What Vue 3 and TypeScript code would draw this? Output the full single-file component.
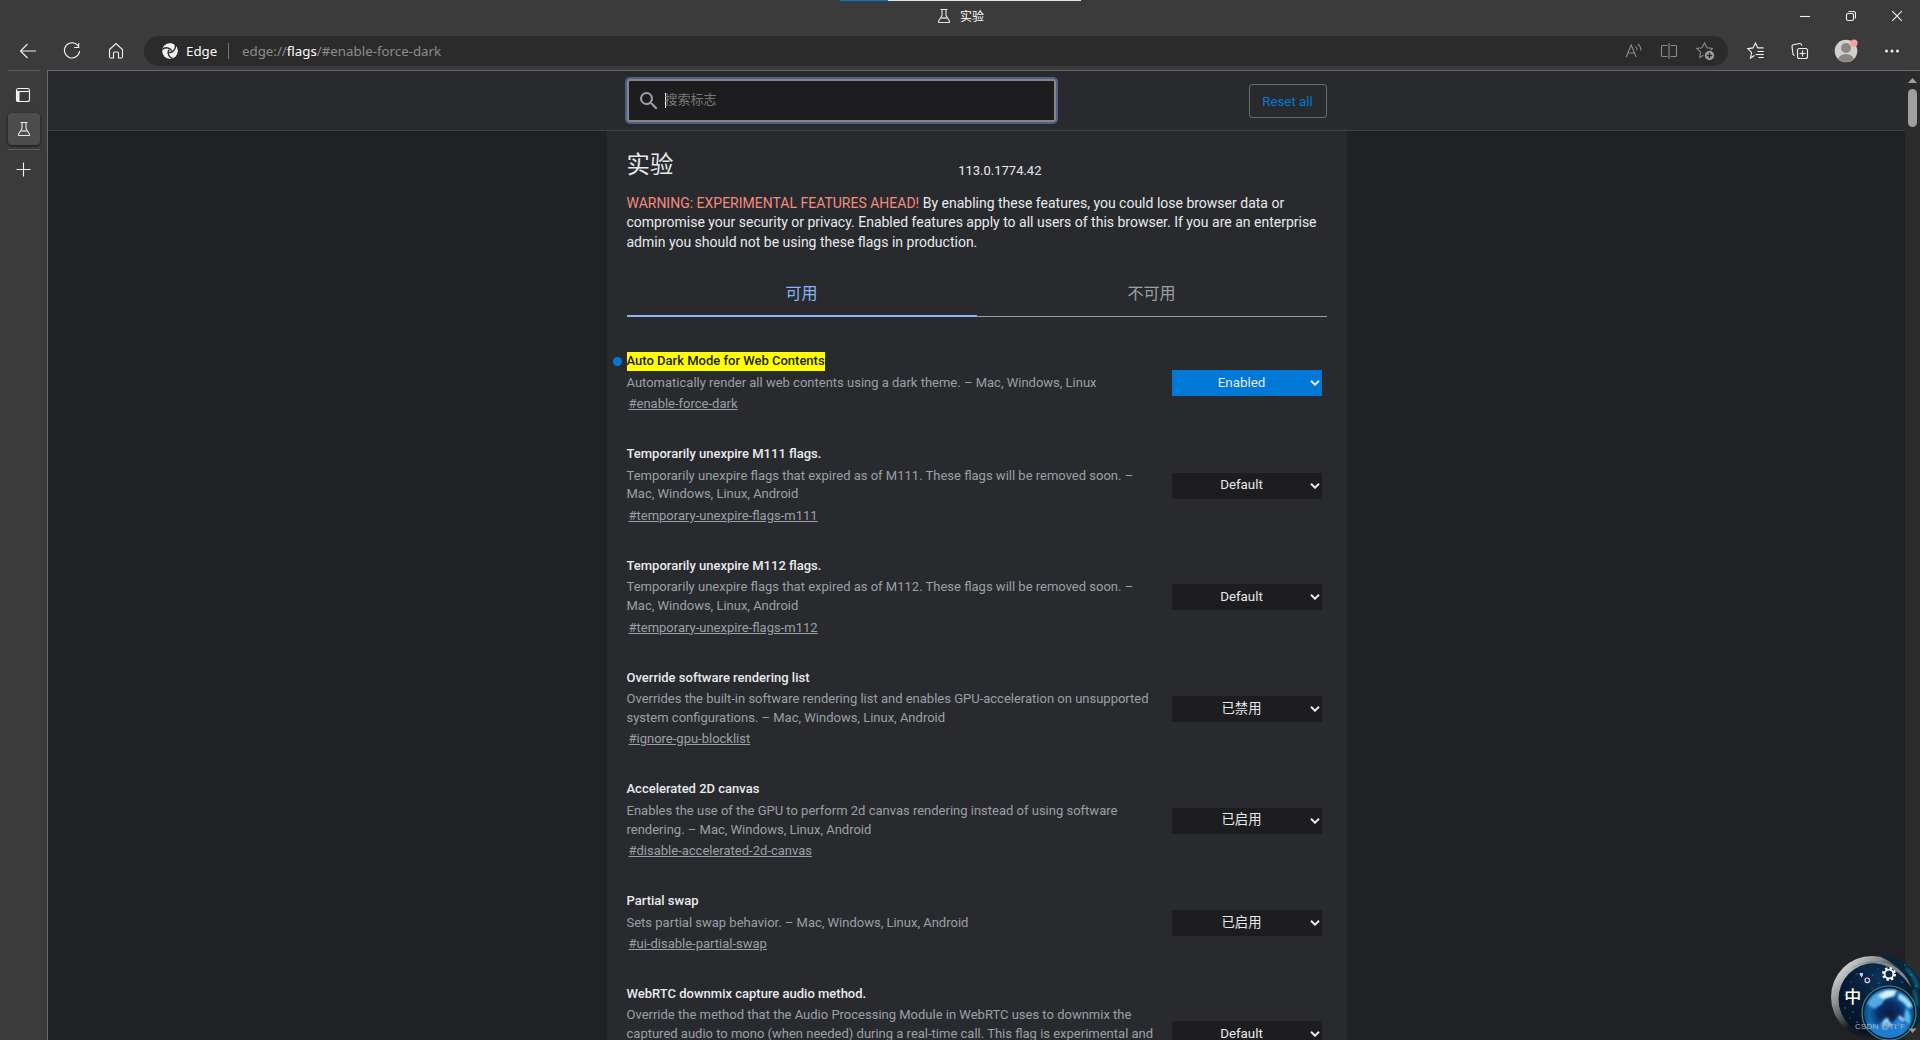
<script setup lang="ts">
interface Flag {
  title: string
  lines: string
  id: string
  value: string
  active?: boolean
}

const flags: Flag[] = [
  {
    title: 'Auto Dark Mode for Web Contents',
    lines: 'Automatically render all web contents using a dark theme. – Mac, Windows, Linux',
    id: 'enable-force-dark',
    value: 'Enabled',
    active: true,
  },
  {
    title: 'Temporarily unexpire M111 flags.',
    lines: 'Temporarily unexpire flags that expired as of M111. These flags will be removed soon. –\nMac, Windows, Linux, Android',
    id: 'temporary-unexpire-flags-m111',
    value: 'Default',
  },
  {
    title: 'Temporarily unexpire M112 flags.',
    lines: 'Temporarily unexpire flags that expired as of M112. These flags will be removed soon. –\nMac, Windows, Linux, Android',
    id: 'temporary-unexpire-flags-m112',
    value: 'Default',
  },
  {
    title: 'Override software rendering list',
    lines: 'Overrides the built-in software rendering list and enables GPU-acceleration on unsupported\nsystem configurations. – Mac, Windows, Linux, Android',
    id: 'ignore-gpu-blocklist',
    value: '已禁用',
  },
  {
    title: 'Accelerated 2D canvas',
    lines: 'Enables the use of the GPU to perform 2d canvas rendering instead of using software\nrendering. – Mac, Windows, Linux, Android',
    id: 'disable-accelerated-2d-canvas',
    value: '已启用',
  },
  {
    title: 'Partial swap',
    lines: 'Sets partial swap behavior. – Mac, Windows, Linux, Android',
    id: 'ui-disable-partial-swap',
    value: '已启用',
  },
  {
    title: 'WebRTC downmix capture audio method.',
    lines: 'Override the method that the Audio Processing Module in WebRTC uses to downmix the\ncaptured audio to mono (when needed) during a real-time call. This flag is experimental and',
    id: '',
    value: 'Default',
  },
]
</script>

<template>
  <div class="window">
    <div class="titlebar">
      <div class="loading"><i class="done"></i><i class="rest"></i></div>
      <div class="caption">
        <svg class="flask" width="14" height="16" viewBox="0 0 14 16"><path d="M3.500 1.500h7M5 1.500v6L1.500 13.200q-.5 1.300.9 1.300h9.200q1.400 0 .9-1.300L9 7.500v-6" /><path class="liquid" d="M4 10h6" /></svg>
        <span>实验</span>
      </div>
      <div class="controls">
        <svg width="12" height="12" viewBox="0 0 12 12"><path d="M1 6.500h10" /></svg>
        <svg width="12" height="12" viewBox="0 0 12 12"><rect x="1.500" y="3.500" width="7" height="7" rx="1.500" /><path d="M3.500 1.500h5q2 0 2 2v5" /></svg>
        <svg width="12" height="12" viewBox="0 0 12 12"><path d="M1.200 1.200l9.600 9.600M10.800 1.200l-9.600 9.600" /></svg>
      </div>
    </div>

    <div class="toolbar">
      <svg class="tool" viewBox="0 0 24 24"><path d="M11.500 5L4.500 12l7 7M4.500 12H20" /></svg>
      <svg class="tool" viewBox="0 0 24 24"><path d="M18.200 6.900A7.600 7.600 0 1 0 19.600 12M18.700 4v4.500h-4.500" /></svg>
      <svg class="tool" viewBox="0 0 24 24"><path d="M5.500 10.500L12 4.600l6.500 5.900v7.300q0 1.200-1.200 1.200h-2.800v-5q0-1-1-1h-3q-1 0-1 1v5H6.700q-1.200 0-1.200-1.200z" /></svg>
      <div class="address">
        <svg class="edge-logo" width="16" height="16" viewBox="0 0 16 16">
          <circle class="solid" cx="8" cy="8" r="8" />
          <g stroke="#2b2b2b" stroke-width="1.400">
            <path d="M-.5 7.200Q2.500 3.600 7.200 5.400Q9.500 6.500 9.600 8.200" />
            <path d="M-.5 7.200Q2.500 3.600 7.200 5.400Q9.500 6.500 9.600 8.200" transform="rotate(120 8 8)" />
            <path d="M-.5 7.200Q2.500 3.600 7.200 5.400Q9.500 6.500 9.600 8.200" transform="rotate(240 8 8)" />
          </g>
        </svg>
        <span class="scheme">Edge</span>
        <i class="divider"></i>
        <span class="url">edge://<b>flags</b>/#enable-force-dark</span>
        <div class="address-tools">
          <svg class="tool" viewBox="0 0 24 24"><path d="M5.200 18L10.200 6l5 12M7 14h6.500M14.500 7.300q1.600 1.600 1.600 4M17 4.800q3 2.700 3 6.700" /></svg>
          <svg class="tool" viewBox="0 0 24 24"><path d="M10.500 6.500h-5q-1 0-1 1v9q0 1 1 1h5M13.500 6.500h5q1 0 1 1v9q0 1-1 1h-5M12 4v16" /></svg>
          <svg class="tool" viewBox="0 0 24 24"><path d="M10.500 16.200L6.600 18.500l1-5.300L3.700 9.500l5.300-.8L11.500 4l2.400 4.700 5.600.8-1.600 1.700" /><circle class="solid" cx="16.500" cy="16.500" r="4.700" /><path class="cutout" d="M16.500 13.800v5.400M13.800 16.500h5.400" /></svg>
        </div>
      </div>
      <div class="browser-tools">
        <svg class="tool" viewBox="0 0 24 24"><path d="M10.500 16.500L6.500 19l1.100-5.600-3.800-3.700 5.200-.8L11.500 4l2.300 4.900h5.700M13.500 12.500h6.300M11.500 15.500h8.300M14.500 18.500h5.300" /></svg>
        <svg class="tool" viewBox="0 0 24 24"><path d="M6.500 16.500q-1.200-.3-1.500-1.500L4 7.500q-.1-1.400 1.200-1.800l6.300-1.200q1.600-.2 2 1.200l.3 1" /><rect x="9.500" y="9.500" width="10" height="10" rx="2" /><path d="M14.500 11.500v6M11.500 14.500h6" /></svg>
        <svg class="tool avatar" viewBox="0 0 24 24"><defs><clipPath id="face"><circle cx="12" cy="12" r="11" /></clipPath></defs><circle cx="12" cy="12" r="11.300" fill="#d2d0cd" /><g clip-path="url(#face)" fill="#8a8682"><circle cx="12" cy="9" r="5" /><ellipse cx="12" cy="21" rx="8" ry="6" /></g><circle cx="20" cy="4" r="3.600" fill="#f9a09a" /></svg>
        <svg class="tool" viewBox="0 0 24 24"><g class="solid"><circle cx="6.500" cy="12" r="1.500" /><circle cx="12" cy="12" r="1.500" /><circle cx="17.500" cy="12" r="1.500" /></g></svg>
      </div>
    </div>

    <div class="main">
      <div class="sidebar">
        <i class="rule"></i>
        <svg class="tabs-icon" width="16" height="16" viewBox="0 0 16 16"><rect x="1.500" y="1.500" width="13" height="13" rx="2" /><path d="M1.500 4.500h13" /><path class="solid" d="M1.500 4.500h3v10h-3z" /></svg>
        <div class="active-tab">
          <svg class="flask" width="14" height="16" viewBox="0 0 14 16"><path d="M3.500 1.500h7M5 1.500v6L1.500 13.200q-.5 1.300.9 1.300h9.200q1.400 0 .9-1.300L9 7.500v-6" /><path class="liquid" d="M4 10h6" /></svg>
        </div>
        <i class="rule"></i>
        <svg class="plus" width="16" height="16" viewBox="0 0 16 16"><path d="M7.500 .5v14M.5 7.500h14" /></svg>
      </div>

      <div class="page">
        <div class="content">
          <div class="header">
            <div class="header-row">
              <div class="search">
                <svg width="24" height="24" viewBox="0 0 24 24"><path d="M15.500 14h-.79l-.28-.27A6.471 6.471 0 0 0 16 9.500 6.500 6.500 0 1 0 9.500 16c1.610 0 3.090-.59 4.230-1.570l.27.28v.79l5 4.990L20.490 19l-4.990-5zm-6 0C7.010 14 5 11.990 5 9.500S7.010 5 9.500 5 14 7.010 14 9.500 11.990 14 9.500 14z" /></svg>
                <i class="caret"></i>
                <span>搜索标志</span>
              </div>
              <button class="reset">Reset all</button>
            </div>
          </div>

          <div class="panel">
            <div class="heading">
              <h1>实验</h1>
              <span class="version">113.0.1774.42</span>
            </div>
            <p class="blurb"><span class="warning">WARNING: EXPERIMENTAL FEATURES AHEAD!</span> By enabling these features, you could lose browser data or<br>compromise your security or privacy. Enabled features apply to all users of this browser. If you are an enterprise<br>admin you should not be using these flags in production.</p>
            <div class="tabs">
              <div class="tab selected">可用</div>
              <div class="tab">不可用</div>
            </div>
            <div class="flags">
              <div v-for="flag in flags" :key="flag.title" class="flag" :class="{ active: flag.active, clipped: !flag.id }">
                <div class="info">
                  <h3><span>{{ flag.title }}</span></h3>
                  <p>{{ flag.lines }}</p>
                  <a v-if="flag.id">#{{ flag.id }}</a>
                </div>
                <div class="select">
                  <span>{{ flag.value }}</span>
                  <svg width="10" height="6" viewBox="0 0 10 6"><path d="M1 .8L5 4.700 9 .8" /></svg>
                </div>
              </div>
            </div>
          </div>
        </div>

        <div class="scrollbar">
          <svg width="9" height="5" viewBox="0 0 9 5"><path d="M4.500 0L9 5H0z" /></svg>
          <i class="thumb"></i>
        </div>
      </div>
    </div>

    <svg class="orb" width="100" height="90" viewBox="0 0 100 90">
      <defs>
        <linearGradient id="rim" x1="0" y1=".1" x2=".9" y2="1"><stop offset="0" stop-color="#f0f0f0" /><stop offset=".3" stop-color="#8a8c8e" /><stop offset=".55" stop-color="#17191c" /></linearGradient>
        <radialGradient id="space" cx=".55" cy=".2" r=".9"><stop offset="0" stop-color="#0c3156" /><stop offset=".5" stop-color="#061a34" /><stop offset="1" stop-color="#04101f" /></radialGradient>
        <radialGradient id="planet" cx=".5" cy=".5" r=".5"><stop offset="0" stop-color="#0b1c3b" /><stop offset=".45" stop-color="#0a2f69" /><stop offset=".8" stop-color="#1269ae" /><stop offset="1" stop-color="#0b4a7a" /></radialGradient>
        <filter id="glow" x="-30%" y="-30%" width="160%" height="160%"><feGaussianBlur stdDeviation="1.300" /></filter>
        <clipPath id="globe"><circle cx="69" cy="63" r="25" /></clipPath>
      </defs>
      <circle cx="52" cy="47" r="41" fill="url(#rim)" />
      <path d="M60 6.500Q86 6 100 30V72Q90 86 76 88Q94 70 92 42Q86 18 60 6.500z" fill="#06263b" />
      <path d="M86 18q9 8 12 20M94 40q3 8 3 16" stroke="#0d5470" stroke-width="4" fill="none" filter="url(#glow)" />
      <circle cx="54.500" cy="49" r="36" fill="url(#space)" />
      <path d="M30 19Q50 6 72 15Q86 22 91 37Q80 20 62 14.500Q45 10 30 19z" fill="#7e878d" />
      <g fill="#3f83ad"><circle cx="25" cy="45" r=".7" /><circle cx="31" cy="32" r=".6" /><circle cx="37" cy="24" r=".7" /><circle cx="44" cy="18" r=".6" /><circle cx="53" cy="25" r=".7" /><circle cx="58" cy="19" r=".6" /><circle cx="59" cy="33" r=".7" /><circle cx="52" cy="38" r=".6" /><circle cx="25" cy="58" r=".7" /><circle cx="33" cy="62" r=".8" /><circle cx="37" cy="72" r=".8" /><circle cx="30" cy="68" r=".6" /><circle cx="82" cy="32" r=".8" /><circle cx="91" cy="25" r=".8" /><circle cx="96" cy="36" r=".8" /><circle cx="85" cy="15" r=".7" /></g>
      <circle cx="69" cy="63" r="27" fill="#06172f" stroke="#3a8a98" stroke-width="1.200" />
      <circle cx="69" cy="63" r="25" fill="url(#planet)" />
      <g clip-path="url(#globe)"><g filter="url(#glow)">
        <path d="M47 54q6-12 18-14l6 3-6 6-3 5-8 5z" fill="#4fa9e6" />
        <path d="M58 46l9-6 10 0-3 6-10 3z" fill="#d8f2ff" />
        <path d="M79 43q11 5 14 14l-5 1-4-5-6-4z" fill="#9edcfa" />
        <path d="M46 70q9 7 13 5l5-7 8 5 7-7 5 8 6 1-8 14H54z" fill="#1d7fd2" />
        <path d="M86 58q7 8 3 17l-5-6z" fill="#57bdf4" />
        <path d="M63 75l4-6 3 7M79 66l5 5" stroke="#c3ecff" stroke-width="2" />
      </g></g>
      <g fill="none" stroke="#fff">
        <circle cx="69" cy="24" r="4.400" stroke-width="1.800" />
        <circle cx="69" cy="24" r="6" stroke-width="2" stroke-dasharray="2.350 2.362" />
        <circle cx="47.300" cy="30.300" r="2.300" stroke="#e7cfe9" stroke-width="1.200" />
      </g>
      <path d="M39.500 23h3.500l-.3 2.500-1.200 2-1.500-2.500z" fill="#e7cfe9" />
      <text x="32.700" y="53" class="ime" text-anchor="middle">中</text>
      <text x="35" y="79" class="mark">CSDN @TI°F</text>
      <path d="M88.500 78.500h8l-4 4.500z" fill="#999" />
    </svg>
  </div>
</template>

<style>
body {
  margin: 0;
  overflow: hidden;
  background: #202124;
}
</style>

<style scoped>
* {
  box-sizing: border-box;
}
.window {
  position: relative;
  display: flex;
  flex-direction: column;
  width: 1920px;
  height: 1040px;
  overflow: hidden;
  background: #3b3b3b;
  font-family: Roboto, "Noto Sans CJK SC", sans-serif;
  color: #e8eaed;
}
svg {
  display: block;
  flex: none;
  fill: none;
  stroke: #f2f2f2;
  stroke-width: 1.100;
}
.solid {
  fill: #f2f2f2;
  stroke: none;
}
i {
  display: block;
  flex: none;
}

/* window caption */
.titlebar {
  position: relative;
  display: grid;
  grid-template-columns: 1fr auto 1fr;
  align-items: center;
  height: 36px;
  padding-bottom: 4px;
}
.loading {
  position: absolute;
  top: 0;
  left: 840px;
  display: flex;
}
.loading i {
  height: 1px;
}
.done {
  width: 48px;
  background: #0078d4;
}
.rest {
  width: 193px;
  background: #e6e6e6;
}
.caption {
  grid-column: 2;
  display: flex;
  align-items: center;
  gap: 9px;
  padding-left: 1px;
  font-size: 12px;
  line-height: 16px;
  color: #fff;
}
.caption span {
  padding-top: 1px;
}
.flask {
  stroke: #e6e6e6;
}
.liquid {
  stroke: #aaa;
  stroke-width: 2;
}
.controls {
  display: flex;
  justify-content: flex-end;
  gap: 34px;
  padding-right: 17px;
}

/* navigation bar */
.toolbar {
  display: flex;
  align-items: center;
  gap: 20px;
  height: 30px;
  margin-bottom: 4px;
  padding: 0 16px;
}
.tool {
  width: 24px;
  height: 24px;
}
.address {
  display: flex;
  flex: 1;
  align-items: center;
  height: 30px;
  margin: 0 -4px 0 -4px;
  padding: 0 23px 0 18px;
  border-radius: 15px;
  background: #2b2b2b;
  font-family: "Noto Sans", sans-serif;
  font-size: 13.300px;
  line-height: 20px;
}
.edge-logo {
  border-radius: 50%;
}
.scheme {
  width: 42px;
  margin-left: 8px;
  color: #fff;
}
.divider {
  width: 1px;
  height: 16px;
  background: #767676;
}
.url {
  margin-left: 13px;
  color: #8c8c8c;
}
.url b {
  font-weight: 400;
  color: #fff;
}
.address-tools {
  display: flex;
  gap: 12px;
  margin-left: auto;
  margin-right: -12px;
}
.address-tools svg {
  stroke: #8a8a8a;
}
.address-tools .solid {
  fill: #9b9b9b;
}
.cutout {
  stroke: #2b2b2b;
  stroke-width: 1.300;
}
.browser-tools {
  display: flex;
  gap: 22px;
}
.browser-tools svg:first-child {
  margin-right: -2px;
}
.avatar {
  stroke: none;
}

/* vertical tab strip */
.main {
  display: flex;
  flex: 1;
  min-height: 0;
}
.sidebar {
  display: flex;
  flex-direction: column;
  align-items: center;
  width: 47px;
}
.sidebar > * {
  margin-left: 1px;
}
.rule {
  width: 32px;
  height: 1px;
  background: #5f5f5f;
}
.sidebar .tabs-icon {
  margin-top: 16px;
  margin-left: -1px;
}
.active-tab {
  display: flex;
  align-items: center;
  justify-content: center;
  width: 32px;
  height: 32px;
  margin-top: 10px;
  margin-bottom: 4px;
  border-radius: 4px;
  background: #4c4c4c;
  box-shadow: 0 1px 3px rgba(0, 0, 0, 0.6);
}
.plus {
  margin-top: 12px;
}

/* page */
.page {
  display: flex;
  flex: 1;
  border-top: 1px solid #686b68;
  border-left: 1px solid #686b68;
  background: #202124;
}
.content {
  display: flex;
  flex: 1;
  flex-direction: column;
  align-items: center;
  min-height: 0;
  overflow: hidden;
}
.header {
  display: flex;
  flex: none;
  justify-content: center;
  width: 100%;
  height: 60px;
  border-bottom: 1px solid #3f4042;
  background: #292a2d;
}
.header-row {
  display: flex;
  align-items: center;
  justify-content: space-between;
  width: 700px;
  height: 59px;
}
.search {
  display: flex;
  align-items: center;
  width: 429px;
  height: 43px;
  border: 2px solid #868686;
  border-radius: 3px;
  background: #1d1d1f;
  box-shadow: 0 0 0 2px #4d6184;
  font-size: 13px;
  line-height: 20px;
  color: #777;
}
.search svg {
  margin-left: 8px;
  fill: #9aa0a6;
  stroke: none;
}
.caret {
  width: 1px;
  height: 15px;
  margin-left: 4px;
  background: #fff;
}
.search span {
  margin-left: -1px;
  padding-bottom: 2px;
}
.reset {
  width: 78px;
  height: 34px;
  margin-top: 1px;
  padding: 0;
  border: 1px solid #6b6c6e;
  border-radius: 3px;
  background: transparent;
  font: 13.333px Roboto, sans-serif;
  color: #0078d4;
}
.panel {
  flex: none;
  width: 740px;
  height: 909px;
  padding: 15px 20px 0;
  background: #292a2d;
}
.heading {
  display: flex;
  align-items: flex-start;
  justify-content: space-between;
  height: 45px;
}
h1 {
  margin: 0;
  padding-top: 1px;
  font-size: 23.400px;
  font-weight: 400;
  line-height: 36px;
}
.version {
  margin: 15px 285px 0 0;
  font-size: 13px;
  line-height: 19px;
}
.blurb {
  margin: 2.600px 0 0;
  font-size: 14px;
  line-height: 19.570px;
  white-space: nowrap;
}
.warning {
  color: #f28b82;
}
.tabs {
  display: flex;
  height: 46px;
  margin-top: 18.690px;
}
.tab {
  width: 350px;
  padding-top: 1px;
  border-bottom: 1px solid #9aa0a6;
  font-size: 16px;
  line-height: 44px;
  text-align: center;
  color: #9aa0a6;
}
.tab.selected {
  border-bottom: 2px solid #8ab4f8;
  color: #8ab4f8;
}
.flags {
  padding-top: 35.300px;
}
.flag {
  display: flex;
  align-items: center;
  justify-content: space-between;
  margin-bottom: 30.700px;
  padding-right: 5px;
  font-size: 13px;
  line-height: 18.850px;
}
h3 {
  margin: 0 0 2.600px;
  font-size: 13px;
  font-weight: 500;
  line-height: 18.850px;
}
.info p {
  margin: 0 0 2.700px;
  white-space: pre;
  color: #9aa0a6;
}
.info a {
  display: block;
  width: fit-content;
  margin-left: 2px;
  margin-bottom: 0.400px;
  color: #9aa0a6;
  text-decoration: underline;
}
.active h3 {
  position: relative;
}
.active h3::before {
  content: "";
  position: absolute;
  top: 5px;
  left: -14px;
  width: 9px;
  height: 9px;
  border-radius: 50%;
  background: #0078d4;
}
.active h3 span {
  display: inline-block;
  background: #ff0;
  color: #202124;
}
/* the last entry continues below the fold */
.clipped {
  align-items: flex-start;
}
.clipped .select {
  margin-top: 36.500px;
}
.select {
  display: flex;
  align-items: center;
  width: 150px;
  height: 26px;
  padding-right: 2px;
  background: #1d1d1f;
  font-size: 13.333px;
  color: #e8eaed;
}
.select span {
  flex: 1;
  margin-left: 2px;
  text-align: center;
}
.select svg {
  stroke: #e8eaed;
  stroke-width: 2;
}
.active .select {
  background: #0078d7;
}
.active .select span {
  padding-top: 1px;
}

.scrollbar {
  display: flex;
  flex-direction: column;
  align-items: center;
  width: 15px;
  padding-top: 7px;
  background: #2c2c2c;
}
.scrollbar svg {
  fill: #9f9f9f;
  stroke: none;
}
.thumb {
  width: 9px;
  height: 38px;
  margin-top: 6px;
  border-radius: 5px;
  background: #9f9f9f;
}

/* floating input-method orb */
.orb {
  position: absolute;
  right: 0;
  bottom: 0;
  width: 100px;
  height: 90px;
  stroke: none;
}
.ime {
  font: 500 17px "Noto Sans CJK SC", sans-serif;
  fill: #fff;
}
.mark {
  font: 8px "Liberation Sans", sans-serif;
  letter-spacing: 0.200px;
  fill: #b0b8c0;
}
</style>
